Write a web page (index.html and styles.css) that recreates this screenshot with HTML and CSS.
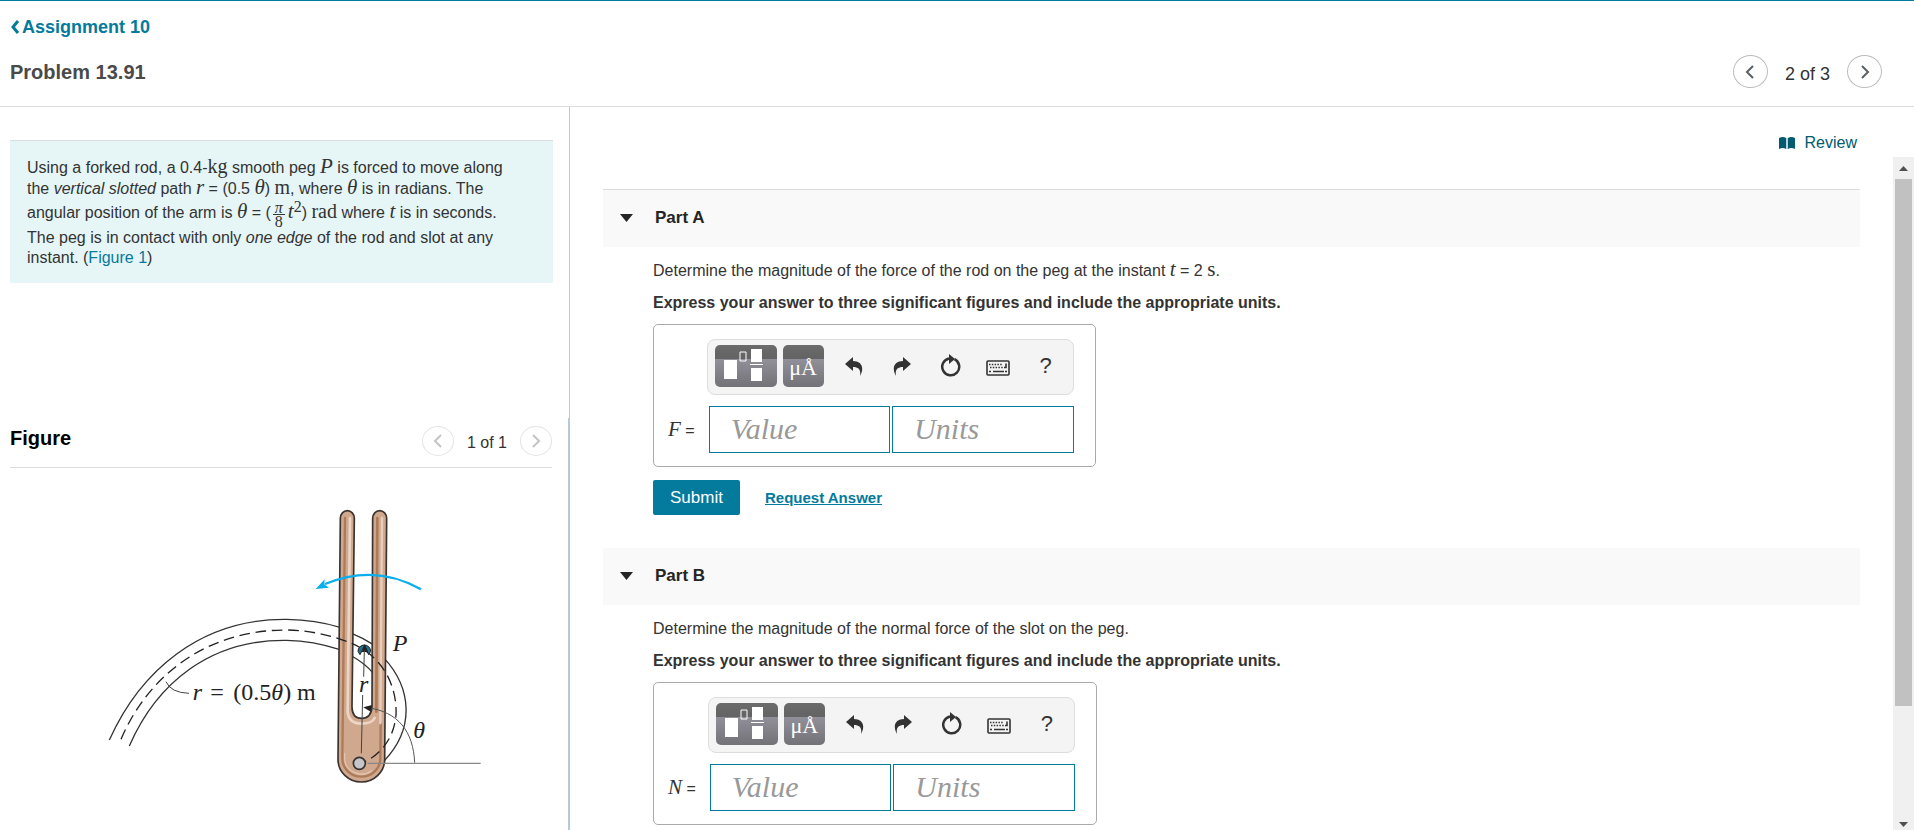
FILE: index.html
```html
<!DOCTYPE html>
<html lang="en">
<head>
    <meta charset="UTF-8">
    <title>Problem 13.91</title>
    <link rel="stylesheet" href="styles.css">
</head>
<body>
    <svg width="0" height="0" class="sprite" aria-hidden="true">
        <symbol id="prev" viewBox="0 0 10 16"><path d="M8 2L2 8l6 6" fill="none" stroke="currentColor" stroke-width="2"/></symbol>
        <symbol id="next" viewBox="0 0 10 16"><path d="M2 2l6 6-6 6" fill="none" stroke="currentColor" stroke-width="2"/></symbol>
        <symbol id="templates" viewBox="0 0 62 42">
            <path d="M9 15h13v19H9zM36 4h11v13H36zM36 23h11v13H36zM35 19h13v1H35z" fill="#fff"/>
            <path d="M25 7h6v9h-6z" fill="none" stroke="#fff" stroke-width="1"/>
        </symbol>
        <symbol id="undo" viewBox="0 0 18 20">
            <path d="M0 8L8 1v4c8 0 12 6 7 15 1-6-1-9-7-9v4z" fill="#333"/>
        </symbol>
        <symbol id="redo" viewBox="0 0 18 20">
            <path d="M18 8L10 1v4C2 5-2 11 3 20c-1-6 1-9 7-9v4z" fill="#333"/>
        </symbol>
        <symbol id="reset" viewBox="0 0 22 24">
            <path d="M15.500 5.200A8.500 8.500 0 1 1 10 4.500" fill="none" stroke="#333" stroke-width="2.500"/>
            <path d="M10 0l6 5-6 5z" fill="#333"/>
        </symbol>
        <symbol id="keyboard" viewBox="0 0 24 16">
            <rect x="1" y="1" width="22" height="14" rx="1" fill="#f4f4f4" stroke="#333" stroke-width="1.600"/>
            <path d="M3 4.500h14M4 7.500h13" stroke="#333" stroke-width="1.600" stroke-dasharray="1.500 1.300"/>
            <path d="M20 3.500v4h-2M7 11.500h11M3 11.500h2M19 11.500h2" stroke="#333" stroke-width="1.600" fill="none"/>
        </symbol>
    </svg>

    <header class="top">
        <a class="back" href="#"><svg viewBox="0 0 10 14"><path d="M8 1L3 7l5 6" fill="none" stroke="currentColor" stroke-width="3"/></svg>Assignment 10</a>
        <div class="title-row">
            <h1>Problem 13.91</h1>
            <nav class="pager">
                <button type="button" aria-label="Previous problem"><svg><use href="#prev"/></svg></button>
                <span>2 of 3</span>
                <button type="button" aria-label="Next problem"><svg><use href="#next"/></svg></button>
            </nav>
        </div>
    </header>

    <main>
        <div class="left">
            <section class="problem">
                <p class="statement">Using a forked rod, a 0.4-<span class="unit">kg</span> smooth peg <i class="math">P</i> is forced to move along<br>
                the <em>vertical slotted</em> path <i class="math">r</i> = (0.5 <i class="math">θ</i>) <span class="unit">m</span>, where <i class="math">θ</i> is in radians. The<br>
                angular position of the arm is <i class="math">θ</i> = (<span class="frac"><i>π</i><span>8</span></span><i class="math">t</i><sup>2</sup>) <span class="unit">rad</span> where <i class="math">t</i> is in seconds.<br>
                The peg is in contact with only <em>one edge</em> of the rod and slot at any<br>
                instant. (<a href="#figure">Figure 1</a>)</p>
            </section>
            <section class="figure" id="figure">
                <div class="figure-head">
                    <h2>Figure</h2>
                    <nav class="pager small">
                        <button type="button" disabled aria-label="Previous figure"><svg><use href="#prev"/></svg></button>
                        <span>1 of 1</span>
                        <button type="button" disabled aria-label="Next figure"><svg><use href="#next"/></svg></button>
                    </nav>
                </div>
                <svg class="drawing" viewBox="0 0 1200 900" role="img" aria-label="Forked rod and slotted path">
                    <!-- slot edges -->
                    <g fill="none" stroke="#333" stroke-width="4">
                        <path d="M58 750C150 545 330 385 590 388C650 389 705 398 750 412M785 430Q822 445 850 464M883 505C965 595 975 715 883 812"/>
                        <path d="M118 768C200 580 360 448 590 451C650 452 705 464 750 479M785 498Q825 520 850 550"/>
                    </g>
                    <!-- forked rod -->
                    <path d="M751 85A21 23 0 0 1 793 85L786 650Q786 685 815 685Q844 685 846 650L848 85A21 23 0 0 1 890 85L884 808A70 68 0 0 1 744 808Z" fill="#d0a88e" stroke="#3a3330" stroke-width="5"/>
                    <g fill="none" stroke-linecap="round">
                        <path d="M765 84L757 805A56 54 0 0 0 871 805L872 700" stroke="#ae7b58" stroke-width="7"/>
                        <path d="M862 84L859 665" stroke="#ae7b58" stroke-width="8"/>
                        <path d="M876 84L871 700" stroke="#e8cfbd" stroke-width="7"/>
                        <path d="M780 84L773 665Q776 701 814 701Q846 701 854 684" stroke="#ecd5c5" stroke-width="8"/>
                        <path d="M764 790V805A50 47 0 0 0 845 842" stroke="#e2c3ae" stroke-width="4"/>
                    </g>
                    <!-- centre line of the slot -->
                    <path d="M93 748C175 555 350 420 590 420C665 421 730 438 785 460C880 500 922 590 918 675C912 750 865 800 815 819" fill="none" stroke="#222" stroke-width="4" stroke-dasharray="32 17"/>
                    <!-- peg -->
                    <path d="M804 484A19 19 0 1 1 842 484L836 494L824 466L810 494Z" fill="#21708f" stroke="#222" stroke-width="3"/>
                    <path d="M824 462L834 486H815Z" fill="#222"/>
                    <path d="M823 480L821 560M818 615L814 790" stroke="#444" stroke-width="3"/>
                    <circle cx="808" cy="820" r="18" fill="#c6c6ca" stroke="#333" stroke-width="5"/>
                    <!-- angle -->
                    <path d="M832 820H1172" stroke="#888" stroke-width="4"/>
                    <path d="M974 818C970 725 925 665 832 653" fill="none" stroke="#555" stroke-width="3"/>
                    <path d="M820 652L846 645L842 665Z" fill="#222"/>
                    <!-- direction of rotation -->
                    <path d="M993 298C900 245 800 243 705 282" fill="none" stroke="#08aeee" stroke-width="7"/>
                    <path d="M677 297L704 268L703 283L717 293Z" fill="#08aeee"/>
                    <path d="M228 575Q242 608 297 610" fill="none" stroke="#444" stroke-width="3"/>
                    <g class="labels">
                        <text x="308" y="629" font-style="italic">r</text>
                        <text x="361" y="629">=</text>
                        <text x="430" y="629">(0.5<tspan font-style="italic">θ</tspan>) m</text>
                        <text x="908" y="482" font-style="italic">P</text>
                        <text x="807" y="605" font-style="italic">r</text>
                        <text x="970" y="745" font-style="italic">θ</text>
                    </g>
                </svg>
            </section>
        </div>

        <div class="right">
            <a class="review" href="#"><svg viewBox="0 0 16 12"><path d="M0 1Q4-1 7 1V12Q4 10 0 12zM16 1Q12-1 9 1V12Q12 10 16 12z" fill="#005a70"/><path d="M8 1v11" stroke="#7fa9b5"/></svg>Review</a>
            <div class="pane">
                <div class="parts">
                    <section class="part">
                        <h2 class="part-head"><svg viewBox="0 0 13 8"><path d="M0 0h13L6.500 8z" fill="#252525"/></svg>Part A</h2>
                        <form class="part-body">
                            <p>Determine the magnitude of the force of the rod on the peg at the instant <i class="math">t</i> = 2 <span class="math">s</span>.</p>
                            <p class="express">Express your answer to three significant figures and include the appropriate units.</p>
                            <div class="answer">
                                <label class="symbol" for="f-value"><i>F</i> =</label>
                                <div class="editor">
                                    <div class="toolbar">
                                        <button type="button" class="dark wide" aria-label="Templates"><svg><use href="#templates"/></svg></button>
                                        <button type="button" class="dark">μÅ</button>
                                        <button type="button" class="tool" aria-label="Undo"><svg width="18" height="20"><use href="#undo"/></svg></button>
                                        <button type="button" class="tool" aria-label="Redo"><svg width="18" height="20"><use href="#redo"/></svg></button>
                                        <button type="button" class="tool" aria-label="Reset"><svg width="22" height="24"><use href="#reset"/></svg></button>
                                        <button type="button" class="tool key" aria-label="Keyboard shortcuts"><svg width="24" height="16"><use href="#keyboard"/></svg></button>
                                        <button type="button" class="tool">?</button>
                                    </div>
                                    <div class="fields">
                                        <input type="text" id="f-value" placeholder="Value">
                                        <input type="text" placeholder="Units" aria-label="Units of F">
                                    </div>
                                </div>
                            </div>
                            <div class="actions">
                                <button type="button" class="submit">Submit</button>
                                <a href="#">Request Answer</a>
                            </div>
                        </form>
                    </section>

                    <section class="part">
                        <h2 class="part-head"><svg viewBox="0 0 13 8"><path d="M0 0h13L6.500 8z" fill="#252525"/></svg>Part B</h2>
                        <form class="part-body">
                            <p>Determine the magnitude of the normal force of the slot on the peg.</p>
                            <p class="express">Express your answer to three significant figures and include the appropriate units.</p>
                            <div class="answer">
                                <label class="symbol" for="n-value"><i>N</i> =</label>
                                <div class="editor">
                                    <div class="toolbar">
                                        <button type="button" class="dark wide" aria-label="Templates"><svg><use href="#templates"/></svg></button>
                                        <button type="button" class="dark">μÅ</button>
                                        <button type="button" class="tool" aria-label="Undo"><svg width="18" height="20"><use href="#undo"/></svg></button>
                                        <button type="button" class="tool" aria-label="Redo"><svg width="18" height="20"><use href="#redo"/></svg></button>
                                        <button type="button" class="tool" aria-label="Reset"><svg width="22" height="24"><use href="#reset"/></svg></button>
                                        <button type="button" class="tool key" aria-label="Keyboard shortcuts"><svg width="24" height="16"><use href="#keyboard"/></svg></button>
                                        <button type="button" class="tool">?</button>
                                    </div>
                                    <div class="fields">
                                        <input type="text" id="n-value" placeholder="Value">
                                        <input type="text" placeholder="Units" aria-label="Units of N">
                                    </div>
                                </div>
                            </div>
                        </form>
                    </section>
                </div>
                <div class="scrollbar" aria-hidden="true">
                    <svg viewBox="0 0 9 5"><path d="M0 5L4.500 0 9 5z" fill="#505050"/></svg>
                    <div class="track"><div class="thumb"></div></div>
                    <svg viewBox="0 0 9 5"><path d="M0 0h9L4.500 5z" fill="#505050"/></svg>
                </div>
            </div>
        </div>
    </main>
</body>
</html>
```

FILE: styles.css
```css
* { box-sizing: border-box; }
body { margin: 0; height: 100vh; display: flex; flex-direction: column; overflow: hidden; background: #fff; color: #333; font-family: "Liberation Sans", Arial, sans-serif; font-size: 16px; line-height: 20px; }
h1, h2, p { margin: 0; }
button, input { font-family: inherit; margin: 0; padding: 0; }
a { color: #047a9c; text-decoration: none; }
svg { display: block; }
.sprite { position: absolute; }

/* header */
.top { border-top: 1px solid #047a9c; border-bottom: 1px solid #ddd; padding: 14px 32px 18px 10px; }
.back { display: flex; align-items: center; width: fit-content; font-size: 18px; line-height: 24px; font-weight: bold; }
.back svg { width: 10px; height: 14px; margin-right: 2px; }
.title-row { display: flex; justify-content: space-between; align-items: center; margin-top: 16px; }
h1 { font-size: 20px; line-height: 24px; color: #4a4a4a; }
.pager { display: flex; align-items: center; gap: 17px; font-size: 18px; }
.pager span { padding-top: 4px; }
.pager button { display: grid; place-items: center; width: 35px; height: 33px; border: 1px solid #bbb; border-radius: 50%; background: #fff; color: #5a6068; }
.pager svg { width: 10px; height: 16px; }
.pager.small { gap: 13px; font-size: 16px; }
.pager.small button { width: 32px; height: 30px; border-color: #e4e4e4; color: #c4c4c4; }

main { flex: 1; display: grid; grid-template-columns: 570px 1fr; min-height: 0; }

/* left column */
.left { display: flex; flex-direction: column; }
.problem { min-height: 311px; padding: 33px 16px 0 10px; border-right: 1px solid #b8c9db; }
.statement { height: 143px; padding: 16px 0 0 17px; border-top: 1px solid #d8dcdc; background: #e6f6f7; white-space: nowrap; }
.math, .unit { font-family: "Liberation Serif", serif; font-size: 21px; line-height: 18px; }
.unit { font-size: 20px; }
.frac { display: inline-flex; flex-direction: column; align-items: center; vertical-align: middle; margin: 0 3px 0 2px; font-family: "Liberation Serif", serif; font-size: 16px; line-height: 13px; }
.frac i { border-bottom: 1px solid #333; padding: 0 2px; }
sup { font-family: "Liberation Serif", serif; font-size: 16px; line-height: 1; }
.figure { flex: 1; padding: 8px 16px 0 10px; border-right: 2px solid #b8c9db; }
.figure-head { display: flex; justify-content: space-between; align-items: flex-start; height: 42px; border-bottom: 1px solid #ddd; }
.figure-head h2 { font-size: 20px; line-height: 24px; color: #000; }
.drawing { width: 400px; height: 300px; margin: 22px 0 0 80px; }
.labels { font-family: "Liberation Serif", serif; font-size: 72px; fill: #222; }

/* right column */
.right { display: flex; flex-direction: column; min-width: 0; min-height: 0; }
.review { display: flex; align-items: center; align-self: flex-end; gap: 10px; margin: 26px 57px 4px 0; color: #005a70; }
.review svg { width: 16px; height: 12px; }
.pane { flex: 1; display: flex; min-height: 0; }
.parts { flex: 1; padding: 32px 33px 0; overflow: hidden; }
.part { margin-bottom: 33px; }
.part-head { display: flex; align-items: center; gap: 22px; height: 57px; padding: 0 0 2px 17px; background: #f9f9f9; color: #252525; font-size: 17px; }
.part:first-child .part-head { height: 58px; border-top: 1px solid #ddd; }
.part-head svg { width: 13px; height: 8px; }
.part-body { padding: 14px 0 0 50px; }
.part-body .math { line-height: 0; }
.express { margin-top: 12px; font-weight: bold; }

.answer { display: flex; width: fit-content; margin-top: 11px; padding: 14px 21px 13px 14px; border: 1px solid #aaa; border-radius: 5px; }
.symbol { align-self: flex-end; padding-right: 12px; line-height: 44px; white-space: nowrap; }
.symbol i { font-family: "Liberation Serif", serif; font-size: 21px; }
.editor { width: 367px; }
.toolbar { display: flex; align-items: center; height: 56px; padding: 0 0 2px 7px; border: 1px solid #ddd; border-radius: 8px; background: #f4f4f4; }
.toolbar button { border: 0; background: none; color: #333; }
.toolbar .dark { width: 41px; height: 42px; margin-right: 6px; border-radius: 5px; background: linear-gradient(#6b6b6b 0, #636363 33%, #918f99 34%, #737277 100%); color: #fff; font: 22px/46px "Liberation Serif", serif; }
.toolbar .wide { width: 62px; }
.wide svg { width: 62px; height: 42px; }
.toolbar .tool { display: grid; place-items: center; width: 48px; height: 42px; font-size: 22px; }
.toolbar .key { padding-top: 4px; }
.fields { display: flex; gap: 2px; margin: 11px 0 0 2px; }
.fields input { flex: 1; min-width: 0; height: 47px; padding: 0 21px 2px; border: 1px solid #047a9c; background: #fff; color: #333; font: italic 30px "Liberation Serif", serif; }
.fields input::placeholder { color: #999; opacity: 1; }

.actions { display: flex; align-items: center; gap: 25px; margin-top: 13px; }
.submit { width: 87px; height: 35px; border: 0; border-radius: 2px; background: #047a9c; color: #fff; font-size: 17px; }
.actions a { font-size: 15px; font-weight: bold; text-decoration: underline; }

.scrollbar { display: flex; flex-direction: column; align-items: center; width: 21px; padding: 9px 0 3px; background: #f0f0f0; }
.scrollbar svg { width: 9px; height: 5px; }
.track { flex: 1; width: 17px; margin: 8px 0; }
.thumb { height: 83%; background: #c1c1c1; }
```
